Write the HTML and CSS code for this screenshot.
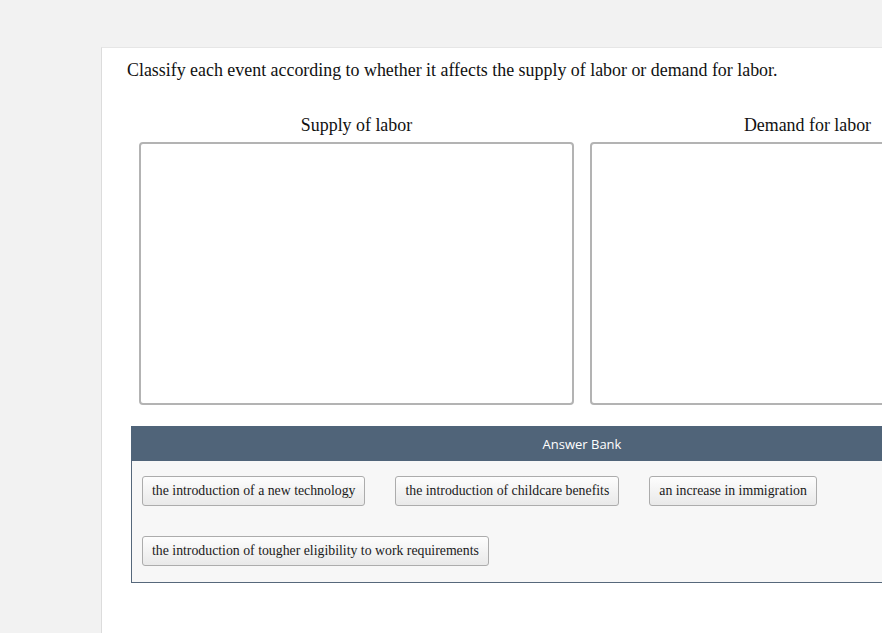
FILE: index.html
```html
<!DOCTYPE html>
<html>
<head>
<meta charset="utf-8">
<link rel="stylesheet" href="styles.css">
</head>
<body>
<div class="panel">
  <p class="question">Classify each event according to whether it affects the supply of labor or demand for labor.</p>
  <div class="columns">
    <div class="column">
      <div class="col-title">Supply of labor</div>
      <div class="dropzone"></div>
    </div>
    <div class="column">
      <div class="col-title">Demand for labor</div>
      <div class="dropzone"></div>
    </div>
  </div>
  <div class="bank">
    <div class="bank-header">Answer Bank</div>
    <div class="bank-body">
      <div class="chip">the introduction of a new technology</div>
      <div class="chip">the introduction of childcare benefits</div>
      <div class="chip">an increase in immigration</div>
      <div class="chip">the introduction of tougher eligibility to work requirements</div>
    </div>
  </div>
</div>
</body>
</html>
```

FILE: styles.css
```css
html, body {
  margin: 0;
  padding: 0;
  background: #f2f2f2;
  overflow: hidden;
  height: 633px;
}
.panel {
  margin: 47px 0 0 101px;
  width: 1000px;
  height: 700px;
  background: #ffffff;
  border-left: 1px solid #dcdcdc;
  border-top: 1px solid #e6e6e6;
  padding: 12px 0 0 25px;
  box-sizing: border-box;
  font-family: "Liberation Serif", "Times New Roman", serif;
  color: #111;
}
.question {
  margin: 0;
  font-size: 17.9px;
  line-height: 20px;
}
.columns {
  display: flex;
  gap: 16px;
  margin: 35px 0 0 12px;
}
.column {
  width: 435px;
  flex: none;
}
.col-title {
  text-align: center;
  font-size: 17.9px;
  line-height: 20px;
  margin-bottom: 7px;
}
.dropzone {
  height: 263px;
  border: 2px solid #b3b3b3;
  border-radius: 4px;
  box-sizing: border-box;
}
.bank {
  margin: 21px 0 0 4px;
  width: 902px;
}
.bank-header {
  background: #506479;
  color: #ffffff;
  height: 35px;
  line-height: 36px;
  text-align: center;
  font-family: "Open Sans", "Liberation Sans", sans-serif;
  font-size: 13px;
}
.bank-body {
  background: #f7f7f7;
  border: 1px solid #56687b;
  border-top: none;
  padding: 15px 10px 16px;
  display: flex;
  flex-wrap: wrap;
  gap: 30px 30px;
}
.chip {
  height: 30px;
  line-height: 28px;
  box-sizing: border-box;
  padding: 0 9px;
  border: 1px solid #acacac;
  border-radius: 3px;
  background: linear-gradient(#fdfdfd, #e9e9e9);
  font-size: 13.8px;
  color: #1a1a1a;
  white-space: nowrap;
}
```
